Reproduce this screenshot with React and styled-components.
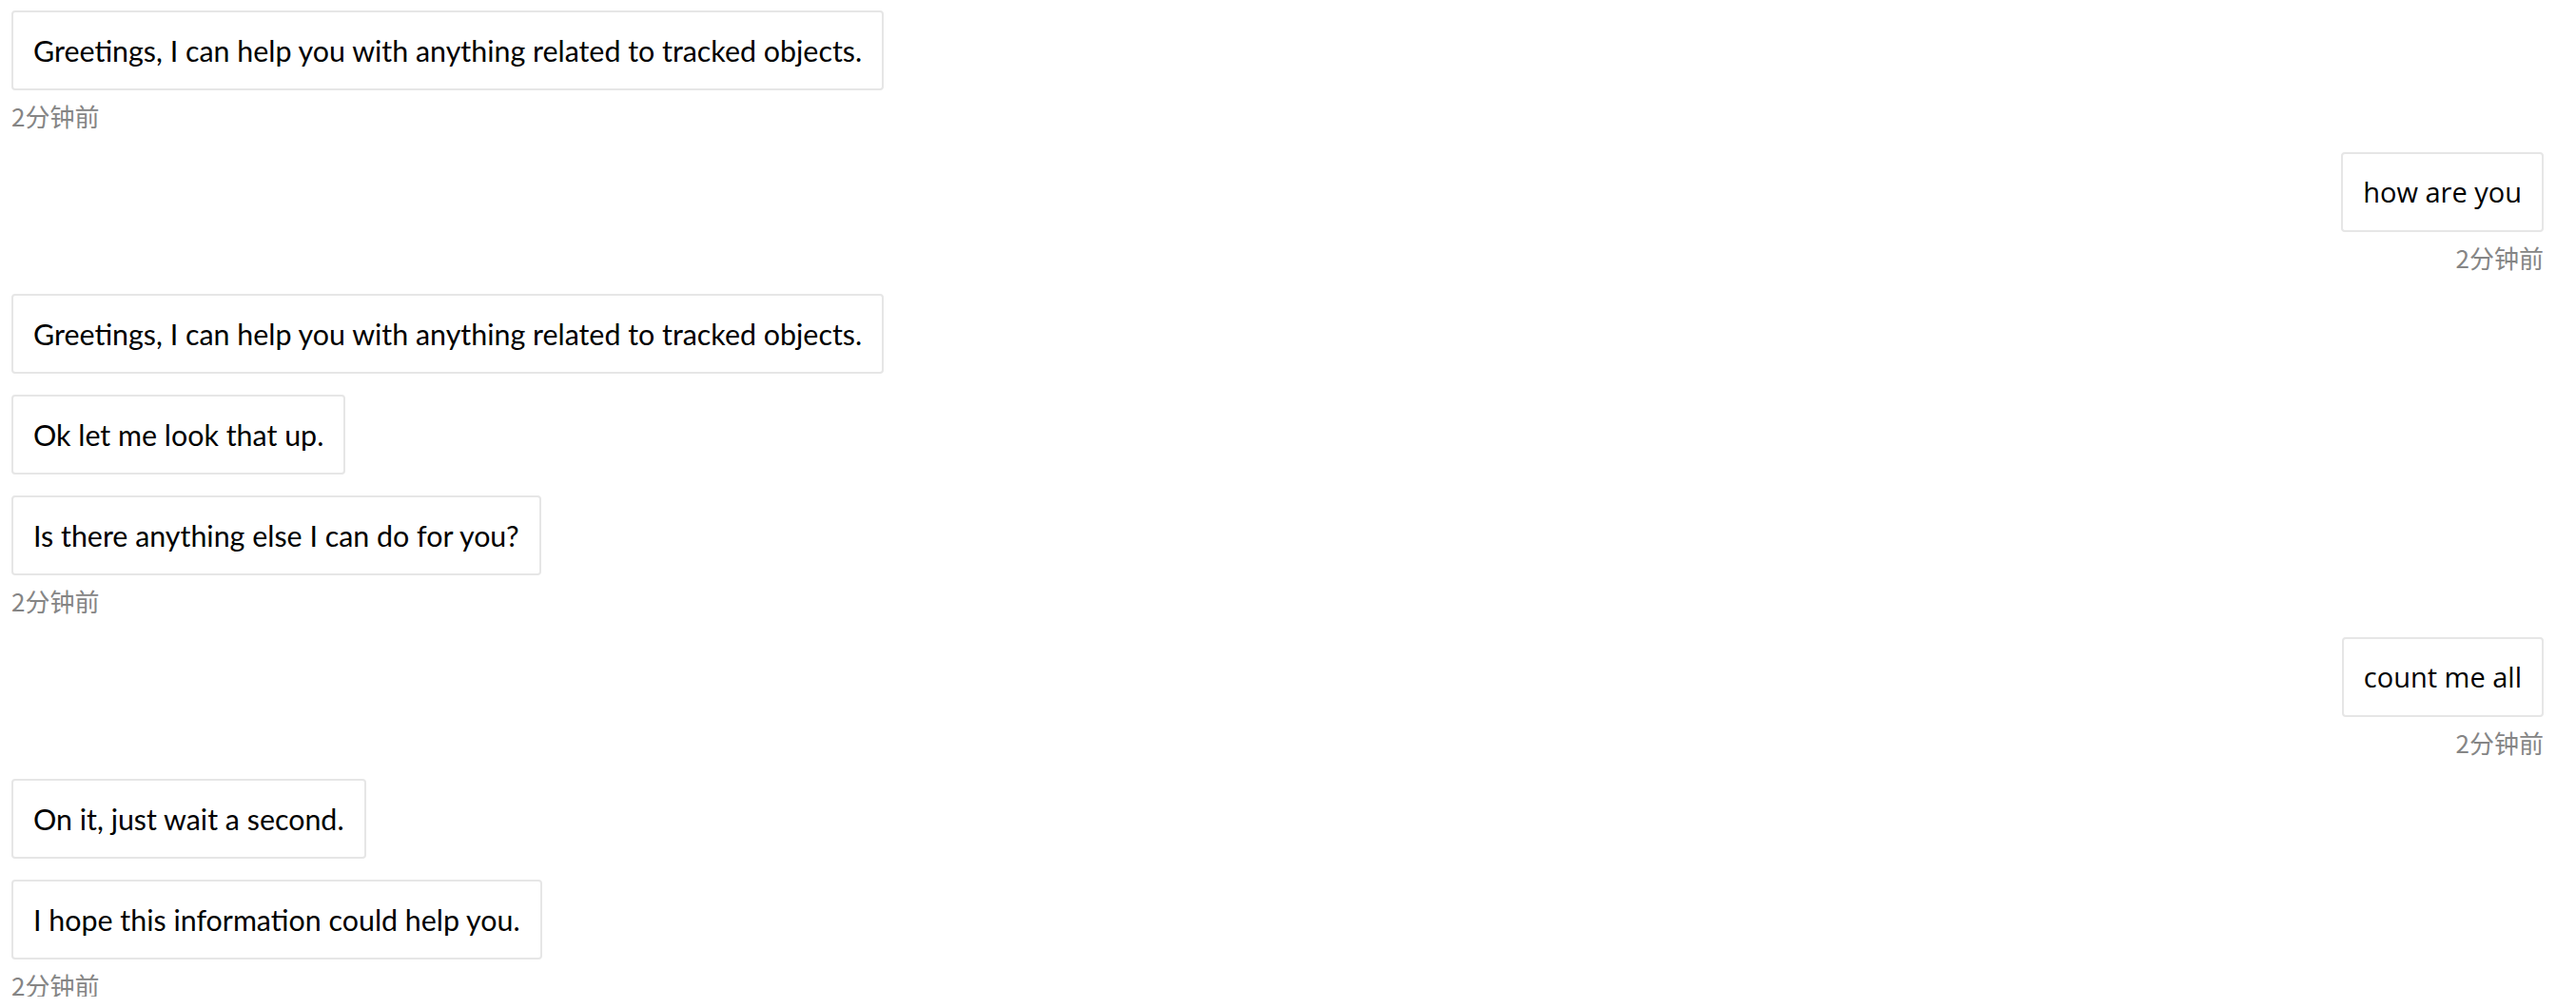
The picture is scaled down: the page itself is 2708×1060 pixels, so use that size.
import React from 'react';
import styled, { createGlobalStyle } from 'styled-components';

const GlobalStyle = createGlobalStyle`
  html, body {
    margin: 0;
    padding: 0;
    background: #ffffff;
  }
  body {
    font-family: 'Lato', 'Liberation Sans', sans-serif;
    color: #000;
  }
`;

const conversation = [
  {
    id: 1,
    mine: false,
    time: '2分钟前',
    texts: ['Greetings, I can help you with anything related to tracked objects.'],
  },
  { id: 2, mine: true, time: '2分钟前', texts: ['how are you'] },
  {
    id: 3,
    mine: false,
    time: '2分钟前',
    texts: [
      'Greetings, I can help you with anything related to tracked objects.',
      'Ok let me look that up.',
      'Is there anything else I can do for you?',
    ],
  },
  { id: 4, mine: true, time: '2分钟前', texts: ['count me all'] },
  {
    id: 5,
    mine: false,
    time: '2分钟前',
    texts: ['On it, just wait a second.', 'I hope this information could help you.'],
  },
];

function App() {
  return (
    <>
      <GlobalStyle />
      <Thread>
        {conversation.map((group) => (
          <Group key={group.id} $mine={group.mine}>
            <Bubbles $mine={group.mine}>
              {group.texts.map((text, i) => (
                <Bubble key={i} $mine={group.mine}>
                  {text}
                </Bubble>
              ))}
            </Bubbles>
            <Time>{group.time}</Time>
          </Group>
        ))}
      </Thread>
    </>
  );
}

const Thread = styled.div`
  display: flex;
  flex-direction: column;
  gap: 26px;
  padding: 11px 34px 0 12px;
`;

const Group = styled.div`
  display: flex;
  flex-direction: column;
  align-items: ${(p) => (p.$mine ? 'flex-end' : 'flex-start')};
`;

const Bubbles = styled.div`
  display: flex;
  flex-direction: column;
  align-items: ${(p) => (p.$mine ? 'flex-end' : 'flex-start')};
  gap: 22px;
`;

const Bubble = styled.div`
  box-sizing: border-box;
  border: 2px solid #e6e6e6;
  border-radius: 4px;
  padding: 21px;
  font-family: ${(p) =>
    p.$mine ? "'Open Sans', 'Noto Sans', sans-serif" : "'Lato', 'Liberation Sans', sans-serif"};
  font-size: ${(p) => (p.$mine ? '29px' : '30.4px')};
  line-height: 38px;
  color: #000;
  white-space: nowrap;
`;

const Time = styled.div`
  margin-top: 15px;
  font-family: 'Noto Sans CJK SC', 'Noto Sans', sans-serif;
  font-size: 26px;
  line-height: 24px;
  color: #858585;
`;

export default App;
